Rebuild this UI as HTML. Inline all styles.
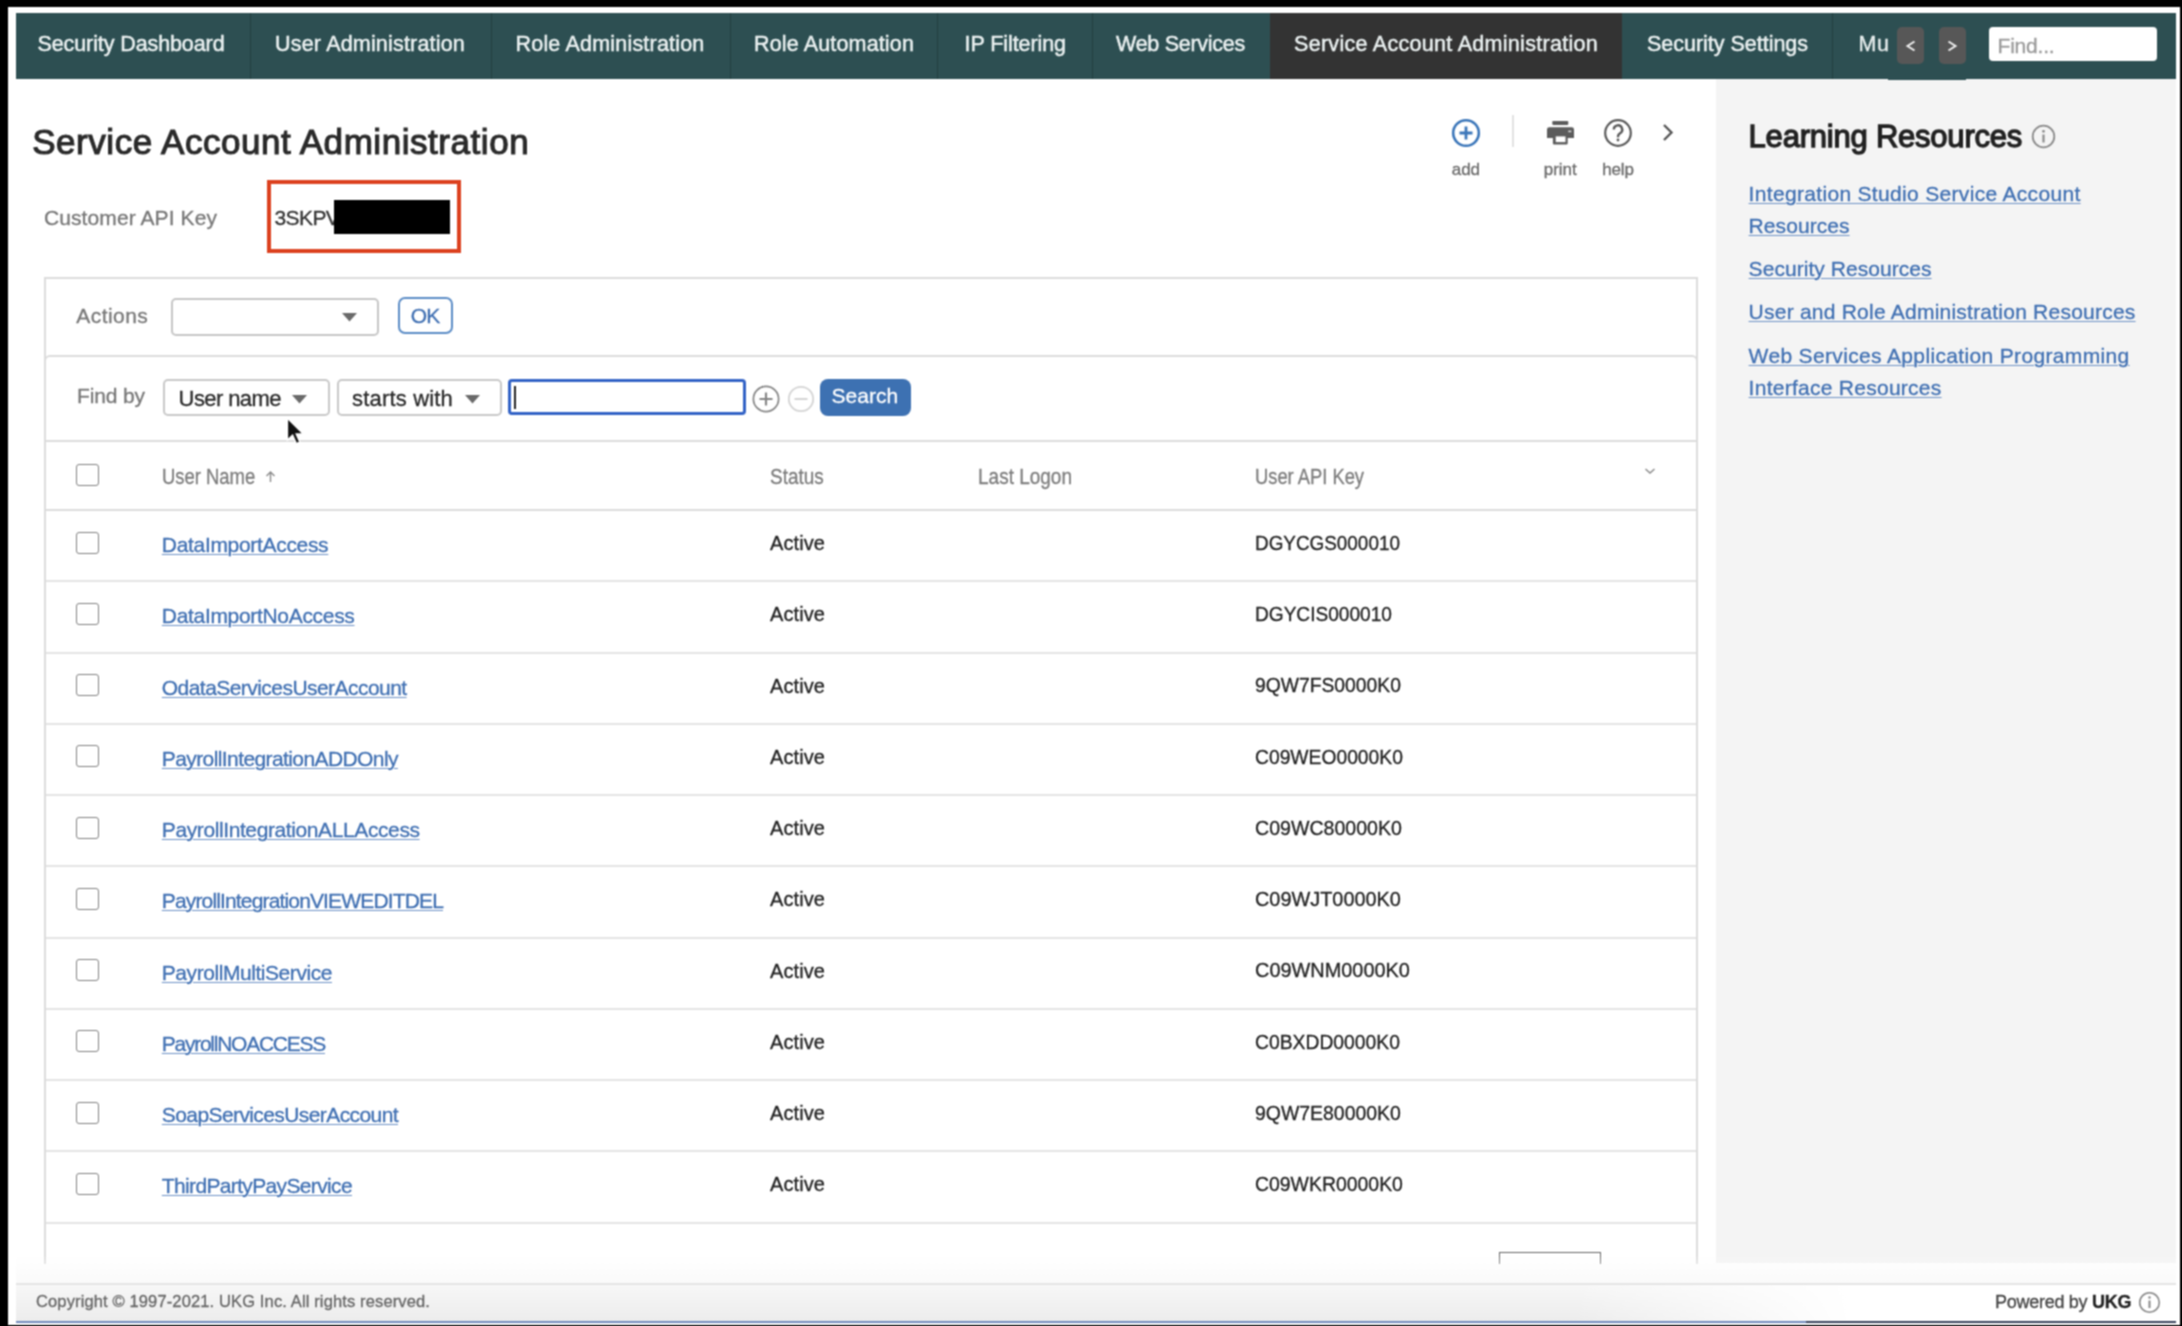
<!DOCTYPE html>
<html><head><meta charset="utf-8"><title>Service Account Administration</title>
<style>
html,body{margin:0;padding:0;width:2182px;height:1326px;overflow:hidden;background:#000;font-family:"Liberation Sans", sans-serif}
.r,.t{position:absolute}
.t{white-space:nowrap;-webkit-text-stroke-width:0.3px}
#wrap{position:absolute;left:0;top:0;width:2182px;height:1326px;filter:url(#soft)}
.lk{text-decoration:underline;text-underline-offset:1.5px;text-decoration-thickness:1.2px;text-decoration-color:#6f93c6}
</style></head><body><svg width="0" height="0" style="position:absolute"><filter id="soft" x="0" y="0" width="100%" height="100%" color-interpolation-filters="sRGB"><feConvolveMatrix order="3" kernelMatrix="1 2 1 2 4 2 1 2 1" edgeMode="duplicate"/></filter></svg><div id="wrap">
<div class="r" style="left:8.0px;top:7.0px;width:2172.0px;height:1317.5px;background:#fff"></div>
<div class="r" style="left:1716.0px;top:79.0px;width:460.0px;height:1184.0px;background:#f4f4f4"></div>
<div class="r" style="left:16.0px;top:12.5px;width:2160.0px;height:66.0px;background:#2d4f52"></div>
<div class="r" style="left:1270.0px;top:12.5px;width:352.0px;height:66.0px;background:#333"></div>
<div class="r" style="left:249.5px;top:12.5px;width:1.0px;height:66.0px;background:#223e40"></div>
<div class="r" style="left:490.5px;top:12.5px;width:1.0px;height:66.0px;background:#223e40"></div>
<div class="r" style="left:729.5px;top:12.5px;width:1.0px;height:66.0px;background:#223e40"></div>
<div class="r" style="left:937.0px;top:12.5px;width:1.0px;height:66.0px;background:#223e40"></div>
<div class="r" style="left:1091.5px;top:12.5px;width:1.0px;height:66.0px;background:#223e40"></div>
<div class="r" style="left:1832.0px;top:12.5px;width:1.0px;height:66.0px;background:#223e40"></div>
<div class="t " style="left:37.5px;top:33.8px;font-size:21.5px;line-height:21.5px;color:#eaf0f0;font-weight:400;letter-spacing:-0.102px;-webkit-text-stroke-width:0.5px">Security Dashboard</div>
<div class="t " style="left:275.0px;top:33.8px;font-size:21.5px;line-height:21.5px;color:#eaf0f0;font-weight:400;letter-spacing:0.189px;-webkit-text-stroke-width:0.5px">User Administration</div>
<div class="t " style="left:515.5px;top:33.8px;font-size:21.5px;line-height:21.5px;color:#eaf0f0;font-weight:400;letter-spacing:0.198px;-webkit-text-stroke-width:0.5px">Role Administration</div>
<div class="t " style="left:754.0px;top:33.8px;font-size:21.5px;line-height:21.5px;color:#eaf0f0;font-weight:400;letter-spacing:0.149px;-webkit-text-stroke-width:0.5px">Role Automation</div>
<div class="t " style="left:964.5px;top:33.8px;font-size:21.5px;line-height:21.5px;color:#eaf0f0;font-weight:400;letter-spacing:-0.073px;-webkit-text-stroke-width:0.5px">IP Filtering</div>
<div class="t " style="left:1116.0px;top:33.8px;font-size:21.5px;line-height:21.5px;color:#eaf0f0;font-weight:400;letter-spacing:-0.270px;-webkit-text-stroke-width:0.5px">Web Services</div>
<div class="t " style="left:1294.0px;top:33.8px;font-size:21.5px;line-height:21.5px;color:#eaf0f0;font-weight:400;letter-spacing:0.294px;-webkit-text-stroke-width:0.5px">Service Account Administration</div>
<div class="t " style="left:1647.0px;top:33.8px;font-size:21.5px;line-height:21.5px;color:#eaf0f0;font-weight:400;letter-spacing:-0.019px;-webkit-text-stroke-width:0.5px">Security Settings</div>
<div class="t " style="left:1858.5px;top:33.8px;font-size:21.5px;line-height:21.5px;color:#eaf0f0;font-weight:400;letter-spacing:0px;width:29px;overflow:hidden;letter-spacing:0.6px">Mu</div>
<div class="r" style="left:1888.0px;top:12.5px;width:77.5px;height:67.5px;background:#2d4f52"></div>
<div class="r" style="left:1897.0px;top:27.0px;width:26.5px;height:37.0px;background:#575757;border-radius:5px"></div>
<div class="r" style="left:1938.5px;top:27.0px;width:27.0px;height:37.0px;background:#575757;border-radius:5px"></div>
<svg class="r" style="left:1904px;top:39px" width="14" height="14" viewBox="0 0 14 14"><path d="M10.5 2.5L3.5 7l7 4.5" fill="none" stroke="#eee" stroke-width="2"/></svg>
<svg class="r" style="left:1945px;top:39px" width="14" height="14" viewBox="0 0 14 14"><path d="M3.5 2.5l7 4.5-7 4.5" fill="none" stroke="#eee" stroke-width="2"/></svg>
<div class="r" style="left:1989.0px;top:26.5px;width:168.0px;height:34.5px;background:#fff;border-radius:4px"></div>
<div class="t " style="left:1997.5px;top:35.2px;font-size:21px;line-height:21px;color:#9a9a9a;font-weight:400;letter-spacing:-0.194px;">Find...</div>
<div class="t " style="left:32.2px;top:124.2px;font-size:35px;line-height:35px;color:#2a2a2a;font-weight:400;letter-spacing:0.549px;-webkit-text-stroke-width:1.1px">Service Account Administration</div>
<div class="t " style="left:44.0px;top:207.0px;font-size:21px;line-height:21px;color:#777;font-weight:400;letter-spacing:0.089px;">Customer API Key</div>
<div class="r" style="left:267.2px;top:180.4px;width:194.1px;height:72.3px;border:4.3px solid #dc411f;box-sizing:border-box"></div>
<div class="t " style="left:274.5px;top:207.2px;font-size:21px;line-height:21px;color:#333;font-weight:400;letter-spacing:-0.6px;">3SKPV</div>
<div class="r" style="left:334.0px;top:200.3px;width:116.0px;height:34.1px;background:#000"></div>
<svg class="r" style="left:1450px;top:117px" width="32" height="32" viewBox="0 0 32 32"><circle cx="16" cy="16" r="12.8" fill="none" stroke="#3b76b9" stroke-width="2.6"/><path d="M16 9.5v13M9.5 16h13" stroke="#3b76b9" stroke-width="2.8"/></svg>
<div class="t " style="left:1451.8px;top:160.6px;font-size:17px;line-height:17px;color:#6a6a6a;font-weight:400;letter-spacing:-0.125px;">add</div>
<div class="r" style="left:1512.3px;top:115.0px;width:1.5px;height:32.0px;background:#e2e2e2"></div>
<svg class="r" style="left:1546px;top:119px" width="29" height="27" viewBox="0 0 29 27"><rect x="6.3" y="1.9" width="16" height="4" rx="0.8" fill="#5c5c5c"/><path d="M3.3 8.2h22.5a2.2 2.2 0 0 1 2.2 2.2v8.7h-27v-8.7a2.2 2.2 0 0 1 2.2-2.2z" fill="#5c5c5c"/><rect x="6.9" y="15.6" width="14.8" height="9.8" rx="0.8" fill="#5c5c5c"/><rect x="9.7" y="17.4" width="9.8" height="5.7" fill="#fff"/><rect x="22.3" y="11.6" width="3" height="1.6" fill="#ddd"/></svg>
<div class="t " style="left:1543.7px;top:160.6px;font-size:17px;line-height:17px;color:#6a6a6a;font-weight:400;letter-spacing:-0.016px;">print</div>
<svg class="r" style="left:1603px;top:118px" width="30" height="30" viewBox="0 0 30 30"><circle cx="15" cy="15" r="12.8" fill="none" stroke="#5a5a5a" stroke-width="2.2"/><path d="M10.8 11.6a4.2 4.2 0 1 1 6.3 3.6c-1.4.8-2.1 1.6-2.1 3.2v.8" fill="none" stroke="#5a5a5a" stroke-width="2.4"/><circle cx="15" cy="22" r="1.4" fill="#5a5a5a"/></svg>
<div class="t " style="left:1602.2px;top:160.6px;font-size:17px;line-height:17px;color:#6a6a6a;font-weight:400;letter-spacing:-0.160px;">help</div>
<svg class="r" style="left:1660px;top:122px" width="16" height="21" viewBox="0 0 16 21"><path d="M4 3l7.5 7.5L4 18" fill="none" stroke="#555" stroke-width="2.4"/></svg>
<div class="t " style="left:1748.6px;top:121.3px;font-size:31px;line-height:31px;color:#222;font-weight:400;letter-spacing:-0.220px;-webkit-text-stroke-width:1.3px">Learning Resources</div>
<svg class="r" style="left:2031px;top:124px" width="25" height="25" viewBox="0 0 25 25"><circle cx="12.5" cy="12.5" r="10.8" fill="none" stroke="#8a8a8a" stroke-width="1.8"/><rect x="11.4" y="10.5" width="2.2" height="8" fill="#8a8a8a"/><circle cx="12.5" cy="7.3" r="1.4" fill="#8a8a8a"/></svg>
<div class="t lk" style="left:1748.6px;top:182.9px;font-size:21px;line-height:21px;color:#3f6fb2;font-weight:400;letter-spacing:0.323px;">Integration Studio Service Account</div>
<div class="t lk" style="left:1748.6px;top:215.2px;font-size:21px;line-height:21px;color:#3f6fb2;font-weight:400;letter-spacing:0.068px;">Resources</div>
<div class="t lk" style="left:1748.6px;top:257.6px;font-size:21px;line-height:21px;color:#3f6fb2;font-weight:400;letter-spacing:0.051px;">Security Resources</div>
<div class="t lk" style="left:1748.6px;top:301.1px;font-size:21px;line-height:21px;color:#3f6fb2;font-weight:400;letter-spacing:0.232px;">User and Role Administration Resources</div>
<div class="t lk" style="left:1748.6px;top:344.7px;font-size:21px;line-height:21px;color:#3f6fb2;font-weight:400;letter-spacing:0.349px;">Web Services Application Programming</div>
<div class="t lk" style="left:1748.6px;top:377.0px;font-size:21px;line-height:21px;color:#3f6fb2;font-weight:400;letter-spacing:0.266px;">Interface Resources</div>
<div class="r" style="left:43.5px;top:276.5px;width:1654.0px;height:2.0px;background:#dcdcdc"></div>
<div class="r" style="left:43.5px;top:276.5px;width:2.0px;height:987.0px;background:#dcdcdc"></div>
<div class="r" style="left:1695.5px;top:276.5px;width:2.0px;height:987.0px;background:#dcdcdc"></div>
<div class="r" style="left:43.5px;top:354.5px;width:1654.0px;height:909.0px;border:2px solid #dcdcdc;border-bottom:none;border-radius:6px 6px 0 0;box-sizing:border-box"></div>
<div class="t " style="left:76.3px;top:304.7px;font-size:21px;line-height:21px;color:#777;font-weight:400;letter-spacing:0.446px;">Actions</div>
<div class="r" style="left:170.5px;top:298.3px;width:208.5px;height:37.5px;border:2px solid #c6c6c6;border-radius:5px;box-sizing:border-box;background:#fff"></div>
<svg class="r" style="left:340.5px;top:312px" width="17" height="10" viewBox="0 0 17 10"><path d="M1 1h15L8.5 9.5z" fill="#6a6a6a"/></svg>
<div class="r" style="left:398.0px;top:297.0px;width:54.6px;height:36.7px;border:2px solid #5b8cc6;border-radius:7px;box-sizing:border-box;background:#fff"></div>
<div class="t " style="left:410.8px;top:304.7px;font-size:21px;line-height:21px;color:#3f6fb2;font-weight:400;letter-spacing:-0.972px;">OK</div>
<div class="t " style="left:77.0px;top:385.4px;font-size:21px;line-height:21px;color:#777;font-weight:400;letter-spacing:-0.125px;">Find by</div>
<div class="r" style="left:162.5px;top:379.1px;width:167.5px;height:37.0px;border:2px solid #c8c8c8;border-radius:5px;box-sizing:border-box;background:#fff"></div>
<div class="t " style="left:178.6px;top:387.9px;font-size:22px;line-height:22px;color:#2a2a2a;font-weight:400;letter-spacing:-0.588px;">User name</div>
<svg class="r" style="left:291px;top:394px" width="17" height="10" viewBox="0 0 17 10"><path d="M1 1h15L8.5 9.5z" fill="#6a6a6a"/></svg>
<div class="r" style="left:336.5px;top:379.1px;width:165.9px;height:37.0px;border:2px solid #c8c8c8;border-radius:5px;box-sizing:border-box;background:#fff"></div>
<div class="t " style="left:352.0px;top:387.9px;font-size:22px;line-height:22px;color:#2a2a2a;font-weight:400;letter-spacing:0.179px;">starts with</div>
<svg class="r" style="left:464px;top:394px" width="17" height="10" viewBox="0 0 17 10"><path d="M1 1h15L8.5 9.5z" fill="#6a6a6a"/></svg>
<div class="r" style="left:508.0px;top:379.3px;width:237.7px;height:36.1px;border:3px solid #3363c6;border-radius:4px;box-sizing:border-box;background:#fff"></div>
<div class="r" style="left:514.0px;top:385.6px;width:2.0px;height:23.4px;background:#222"></div>
<svg class="r" style="left:751px;top:384px" width="30" height="30" viewBox="0 0 30 30"><circle cx="15" cy="15" r="12.6" fill="none" stroke="#858585" stroke-width="1.7"/><path d="M15 8.5v13M8.5 15h13" stroke="#858585" stroke-width="2.2"/></svg>
<svg class="r" style="left:786px;top:384px" width="30" height="30" viewBox="0 0 30 30"><circle cx="15" cy="15" r="12.2" fill="none" stroke="#d4d4d4" stroke-width="1.8"/><path d="M8.5 15h13" stroke="#d4d4d4" stroke-width="2"/></svg>
<div class="r" style="left:819.6px;top:378.5px;width:91.5px;height:37.1px;background:#3d71b2;border-radius:8px"></div>
<div class="t " style="left:831.5px;top:385.4px;font-size:21px;line-height:21px;color:#fff;font-weight:400;letter-spacing:0.042px;">Search</div>
<div class="r" style="left:45.5px;top:440.3px;width:1650.0px;height:2.0px;background:#dcdcdc"></div>
<div class="r" style="left:45.5px;top:509.1px;width:1650.0px;height:2.0px;background:#dcdcdc"></div>
<div class="r" style="left:76.0px;top:463.9px;width:23.3px;height:22.1px;border:1.8px solid #828282;border-radius:3px;box-sizing:border-box;background:#fff"></div>
<div class="t sx" style="left:161.8px;top:465.6px;font-size:22px;line-height:22px;color:#7c7c7c;font-weight:400;letter-spacing:0px;transform:scaleX(0.8378);transform-origin:0 0;">User Name</div>
<svg class="r" style="left:264px;top:470px" width="13" height="13" viewBox="0 0 13 13"><path d="M6.5 12V2M2.5 6l4-4 4 4" fill="none" stroke="#8a8a8a" stroke-width="1.4"/></svg>
<div class="t sx" style="left:770.0px;top:465.6px;font-size:22px;line-height:22px;color:#7c7c7c;font-weight:400;letter-spacing:0px;transform:scaleX(0.8625);transform-origin:0 0;">Status</div>
<div class="t sx" style="left:978.4px;top:465.6px;font-size:22px;line-height:22px;color:#7c7c7c;font-weight:400;letter-spacing:0px;transform:scaleX(0.8634);transform-origin:0 0;">Last Logon</div>
<div class="t sx" style="left:1255.1px;top:465.6px;font-size:22px;line-height:22px;color:#7c7c7c;font-weight:400;letter-spacing:0px;transform:scaleX(0.8331);transform-origin:0 0;">User API Key</div>
<svg class="r" style="left:1644px;top:467px" width="12" height="8" viewBox="0 0 12 8"><path d="M1.5 2l4.5 4 4.5-4" fill="none" stroke="#888" stroke-width="1.4"/></svg>
<div class="r" style="left:45.5px;top:580.4px;width:1650.0px;height:2.0px;background:#e4e4e4"></div>
<div class="r" style="left:76.0px;top:531.6px;width:23.3px;height:22.0px;border:1.8px solid #828282;border-radius:3px;box-sizing:border-box;background:#fff"></div>
<div class="t lk" style="left:161.8px;top:534.0px;font-size:21px;line-height:21px;color:#3f6fb2;font-weight:400;letter-spacing:-0.316px;">DataImportAccess</div>
<div class="t " style="left:770.0px;top:533.2px;font-size:20px;line-height:20px;color:#222;font-weight:400;letter-spacing:0.089px;">Active</div>
<div class="t sx" style="left:1255.1px;top:532.7px;font-size:20.5px;line-height:20.5px;color:#222;font-weight:400;letter-spacing:0px;transform:scaleX(0.9214);transform-origin:0 0;">DGYCGS000010</div>
<div class="r" style="left:45.5px;top:651.6px;width:1650.0px;height:2.0px;background:#e4e4e4"></div>
<div class="r" style="left:76.0px;top:602.9px;width:23.3px;height:22.0px;border:1.8px solid #828282;border-radius:3px;box-sizing:border-box;background:#fff"></div>
<div class="t lk" style="left:161.8px;top:605.3px;font-size:21px;line-height:21px;color:#3f6fb2;font-weight:400;letter-spacing:-0.317px;">DataImportNoAccess</div>
<div class="t " style="left:770.0px;top:604.4px;font-size:20px;line-height:20px;color:#222;font-weight:400;letter-spacing:0.089px;">Active</div>
<div class="t sx" style="left:1255.1px;top:604.0px;font-size:20.5px;line-height:20.5px;color:#222;font-weight:400;letter-spacing:0px;transform:scaleX(0.9312);transform-origin:0 0;">DGYCIS000010</div>
<div class="r" style="left:45.5px;top:722.9px;width:1650.0px;height:2.0px;background:#e4e4e4"></div>
<div class="r" style="left:76.0px;top:674.1px;width:23.3px;height:22.0px;border:1.8px solid #828282;border-radius:3px;box-sizing:border-box;background:#fff"></div>
<div class="t lk" style="left:161.8px;top:676.5px;font-size:21px;line-height:21px;color:#3f6fb2;font-weight:400;letter-spacing:-0.548px;">OdataServicesUserAccount</div>
<div class="t " style="left:770.0px;top:675.7px;font-size:20px;line-height:20px;color:#222;font-weight:400;letter-spacing:0.089px;">Active</div>
<div class="t sx" style="left:1255.1px;top:675.2px;font-size:20.5px;line-height:20.5px;color:#222;font-weight:400;letter-spacing:0px;transform:scaleX(0.9414);transform-origin:0 0;">9QW7FS0000K0</div>
<div class="r" style="left:45.5px;top:794.1px;width:1650.0px;height:2.0px;background:#e4e4e4"></div>
<div class="r" style="left:76.0px;top:745.4px;width:23.3px;height:22.0px;border:1.8px solid #828282;border-radius:3px;box-sizing:border-box;background:#fff"></div>
<div class="t lk" style="left:161.8px;top:747.8px;font-size:21px;line-height:21px;color:#3f6fb2;font-weight:400;letter-spacing:-0.594px;">PayrollIntegrationADDOnly</div>
<div class="t " style="left:770.0px;top:746.9px;font-size:20px;line-height:20px;color:#222;font-weight:400;letter-spacing:0.089px;">Active</div>
<div class="t sx" style="left:1255.1px;top:746.5px;font-size:20.5px;line-height:20.5px;color:#222;font-weight:400;letter-spacing:0px;transform:scaleX(0.9404);transform-origin:0 0;">C09WEO0000K0</div>
<div class="r" style="left:45.5px;top:865.4px;width:1650.0px;height:2.0px;background:#e4e4e4"></div>
<div class="r" style="left:76.0px;top:816.6px;width:23.3px;height:22.0px;border:1.8px solid #828282;border-radius:3px;box-sizing:border-box;background:#fff"></div>
<div class="t lk" style="left:161.8px;top:819.0px;font-size:21px;line-height:21px;color:#3f6fb2;font-weight:400;letter-spacing:-0.396px;">PayrollIntegrationALLAccess</div>
<div class="t " style="left:770.0px;top:818.2px;font-size:20px;line-height:20px;color:#222;font-weight:400;letter-spacing:0.089px;">Active</div>
<div class="t sx" style="left:1255.1px;top:817.7px;font-size:20.5px;line-height:20.5px;color:#222;font-weight:400;letter-spacing:0px;transform:scaleX(0.9549);transform-origin:0 0;">C09WC80000K0</div>
<div class="r" style="left:45.5px;top:936.6px;width:1650.0px;height:2.0px;background:#e4e4e4"></div>
<div class="r" style="left:76.0px;top:887.9px;width:23.3px;height:22.0px;border:1.8px solid #828282;border-radius:3px;box-sizing:border-box;background:#fff"></div>
<div class="t lk" style="left:161.8px;top:890.3px;font-size:21px;line-height:21px;color:#3f6fb2;font-weight:400;letter-spacing:-0.848px;">PayrollIntegrationVIEWEDITDEL</div>
<div class="t " style="left:770.0px;top:889.4px;font-size:20px;line-height:20px;color:#222;font-weight:400;letter-spacing:0.089px;">Active</div>
<div class="t sx" style="left:1255.1px;top:889.0px;font-size:20.5px;line-height:20.5px;color:#222;font-weight:400;letter-spacing:0px;transform:scaleX(0.9699);transform-origin:0 0;">C09WJT0000K0</div>
<div class="r" style="left:45.5px;top:1007.9px;width:1650.0px;height:2.0px;background:#e4e4e4"></div>
<div class="r" style="left:76.0px;top:959.1px;width:23.3px;height:22.0px;border:1.8px solid #828282;border-radius:3px;box-sizing:border-box;background:#fff"></div>
<div class="t lk" style="left:161.8px;top:961.5px;font-size:21px;line-height:21px;color:#3f6fb2;font-weight:400;letter-spacing:-0.440px;">PayrollMultiService</div>
<div class="t " style="left:770.0px;top:960.7px;font-size:20px;line-height:20px;color:#222;font-weight:400;letter-spacing:0.089px;">Active</div>
<div class="t sx" style="left:1255.1px;top:960.2px;font-size:20.5px;line-height:20.5px;color:#222;font-weight:400;letter-spacing:0px;transform:scaleX(0.9711);transform-origin:0 0;">C09WNM0000K0</div>
<div class="r" style="left:45.5px;top:1079.1px;width:1650.0px;height:2.0px;background:#e4e4e4"></div>
<div class="r" style="left:76.0px;top:1030.3px;width:23.3px;height:22.0px;border:1.8px solid #828282;border-radius:3px;box-sizing:border-box;background:#fff"></div>
<div class="t lk" style="left:161.8px;top:1032.8px;font-size:21px;line-height:21px;color:#3f6fb2;font-weight:400;letter-spacing:-1.258px;">PayrollNOACCESS</div>
<div class="t " style="left:770.0px;top:1031.9px;font-size:20px;line-height:20px;color:#222;font-weight:400;letter-spacing:0.089px;">Active</div>
<div class="t sx" style="left:1255.1px;top:1031.5px;font-size:20.5px;line-height:20.5px;color:#222;font-weight:400;letter-spacing:0px;transform:scaleX(0.9419);transform-origin:0 0;">C0BXDD0000K0</div>
<div class="r" style="left:45.5px;top:1150.3px;width:1650.0px;height:2.0px;background:#e4e4e4"></div>
<div class="r" style="left:76.0px;top:1101.6px;width:23.3px;height:22.0px;border:1.8px solid #828282;border-radius:3px;box-sizing:border-box;background:#fff"></div>
<div class="t lk" style="left:161.8px;top:1104.0px;font-size:21px;line-height:21px;color:#3f6fb2;font-weight:400;letter-spacing:-0.591px;">SoapServicesUserAccount</div>
<div class="t " style="left:770.0px;top:1103.2px;font-size:20px;line-height:20px;color:#222;font-weight:400;letter-spacing:0.089px;">Active</div>
<div class="t sx" style="left:1255.1px;top:1102.7px;font-size:20.5px;line-height:20.5px;color:#222;font-weight:400;letter-spacing:0px;transform:scaleX(0.9483);transform-origin:0 0;">9QW7E80000K0</div>
<div class="r" style="left:45.5px;top:1221.6px;width:1650.0px;height:2.0px;background:#e4e4e4"></div>
<div class="r" style="left:76.0px;top:1172.8px;width:23.3px;height:22.0px;border:1.8px solid #828282;border-radius:3px;box-sizing:border-box;background:#fff"></div>
<div class="t lk" style="left:161.8px;top:1175.3px;font-size:21px;line-height:21px;color:#3f6fb2;font-weight:400;letter-spacing:-0.644px;">ThirdPartyPayService</div>
<div class="t " style="left:770.0px;top:1174.4px;font-size:20px;line-height:20px;color:#222;font-weight:400;letter-spacing:0.089px;">Active</div>
<div class="t sx" style="left:1255.1px;top:1174.0px;font-size:20.5px;line-height:20.5px;color:#222;font-weight:400;letter-spacing:0px;transform:scaleX(0.9473);transform-origin:0 0;">C09WKR0000K0</div>
<div class="r" style="left:1498.5px;top:1251.5px;width:102.5px;height:12.0px;border:1.5px solid #666;border-bottom:none;box-sizing:border-box"></div>
<div class="r" style="left:16.0px;top:1255.0px;width:2160.0px;height:28.0px;background:linear-gradient(rgba(250,250,250,0),#fafafa)"></div>
<div class="r" style="left:16.0px;top:1283.0px;width:2160.0px;height:1.5px;background:#e4e4e4"></div>
<div class="r" style="left:16.0px;top:1284.5px;width:2160.0px;height:36.0px;background:linear-gradient(90deg,rgba(255,255,255,0) 0%,rgba(255,255,255,0) 72%,#fff 85%,#fff 100%),linear-gradient(#f7f7f7,#ececec)"></div>
<div class="r" style="left:16.0px;top:1320.5px;width:1790.0px;height:2.5px;background:#7089bb"></div>
<div class="r" style="left:1806.0px;top:1320.5px;width:370.0px;height:2.5px;background:#36405a"></div>
<div class="t " style="left:36.0px;top:1292.8px;font-size:16.5px;line-height:16.5px;color:#666;font-weight:400;letter-spacing:0.130px;">Copyright © 1997-2021. UKG Inc. All rights reserved.</div>
<div class="t " style="left:1995.0px;top:1293.1px;font-size:18px;line-height:18px;color:#444;font-weight:400;letter-spacing:-0.276px;">Powered by <b style="color:#222">UKG</b></div>
<svg class="r" style="left:2138px;top:1291px" width="23" height="23" viewBox="0 0 23 23"><circle cx="11.5" cy="11.5" r="9.8" fill="none" stroke="#888" stroke-width="1.6"/><rect x="10.5" y="9.5" width="2" height="7.5" fill="#888"/><circle cx="11.5" cy="6.5" r="1.2" fill="#888"/></svg>
<svg class="r" style="left:285px;top:417px" width="21" height="30" viewBox="0 0 18 26"><path d="M2 1v19l4.5-4.2 3.2 7.2 3-1.3-3.1-7h6.2z" fill="#111" stroke="#fff" stroke-width="1.2"/></svg>
</div></body></html>
